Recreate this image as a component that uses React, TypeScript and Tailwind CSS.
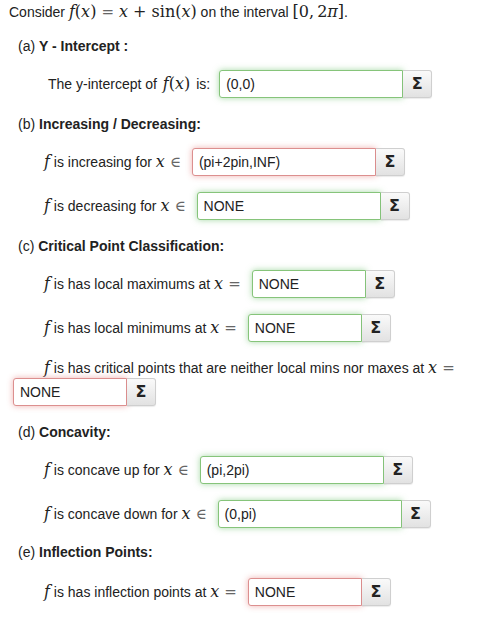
import type { ReactNode } from 'react';

type Status = 'ok' | 'bad';

const MathI = ({ children }: { children: ReactNode }) => (
  <span className="font-['DejaVu_Serif','Liberation_Serif',serif] text-[16px] italic">{children}</span>
);

const MathR = ({ children }: { children: ReactNode }) => (
  <span className="font-['DejaVu_Serif','Liberation_Serif',serif] text-[16px]">{children}</span>
);

const Rel = ({ children }: { children: ReactNode }) => (
  <span className="mx-[5px] font-['DejaVu_Serif','Liberation_Serif',serif] text-[15px] text-[#666]">{children}</span>
);

function AnswerBox({ value, status, width }: { value: string; status: Status; width: string }) {
  const ring =
    status === 'ok'
      ? 'border-[#86c47a] shadow-[0_0_6px_rgba(92,184,92,0.55)]'
      : 'border-[#dc8f8f] shadow-[0_0_6px_rgba(217,83,79,0.45)]';
  return (
    <div className="flex h-[28px] shrink-0">
      <div
        className={`flex items-center rounded-l-[3px] border bg-white px-[6px] text-[14px] text-[#222] ${ring} ${width}`}
      >
        {value}
      </div>
      <div className="flex w-[29px] items-center justify-center rounded-r-[3px] border border-l-0 border-[#cfcfcf] bg-gradient-to-b from-[#fafafa] to-[#e2e2e2] font-['DejaVu_Sans',sans-serif] text-[16px] font-bold text-[#222] shadow-[0_1px_1px_rgba(0,0,0,0.08)]">
        Σ
      </div>
    </div>
  );
}

function Heading({ tag, title, className = '' }: { tag: string; title: string; className?: string }) {
  return (
    <div className={`flex h-[20px] items-center pl-[18px] ${className}`}>
      {tag}&nbsp;<span className="font-bold">{title}</span>
    </div>
  );
}

function Row({ children, className = '' }: { children: ReactNode; className?: string }) {
  return <div className={`flex h-[28px] items-center gap-[6px] pl-[44px] ${className}`}>{children}</div>;
}

const F = () => <MathI>f</MathI>;
const X = () => <MathI>x</MathI>;

export default function App() {
  return (
    <div className="h-[622px] w-[482px] bg-white font-['Liberation_Sans',Arial,sans-serif] text-[14px] text-[#222]">
      <div className="flex h-[24px] items-center pl-[9px]">
        Consider&nbsp;
        <MathI>f</MathI>
        <MathR>(</MathR>
        <MathI>x</MathI>
        <MathR>)</MathR>
        <Rel>=</Rel>
        <MathI>x</MathI>
        <MathR>&nbsp;+&nbsp;sin(</MathR>
        <MathI>x</MathI>
        <MathR>)</MathR>
        &nbsp;on the interval&nbsp;
        <MathR>[0,&#8201;2</MathR>
        <MathI>π</MathI>
        <MathR>]</MathR>.
      </div>

      <Heading tag="(a)" title="Y - Intercept :" className="mt-[12px]" />
      <Row className="mt-[14px] gap-[9px] pl-[48px]">
        <span>
          The y-intercept of{' '}
          <span className="mx-[2px]">
            <MathI>f</MathI>
            <MathR>(</MathR>
            <MathI>x</MathI>
            <MathR>)</MathR>
          </span>{' '}
          is:
        </span>
        <AnswerBox value="(0,0)" status="ok" width="w-[184px]" />
      </Row>

      <Heading tag="(b)" title="Increasing / Decreasing:" className="mt-[16px]" />
      <Row className="mt-[14px]">
        <span>
          <F /> is increasing for <X />
          <Rel>∈</Rel>
        </span>
        <AnswerBox value="(pi+2pin,INF)" status="bad" width="w-[184px]" />
      </Row>
      <Row className="mt-[16px]">
        <span>
          <F /> is decreasing for <X />
          <Rel>∈</Rel>
        </span>
        <AnswerBox value="NONE" status="ok" width="w-[184px]" />
      </Row>

      <Heading tag="(c)" title="Critical Point Classification:" className="mt-[16px]" />
      <Row className="mt-[14px]">
        <span>
          <F /> is has local maximums at <X />
          <Rel>=</Rel>
        </span>
        <AnswerBox value="NONE" status="ok" width="w-[114px]" />
      </Row>
      <Row className="mt-[16px]">
        <span>
          <F /> is has local minimums at <X />
          <Rel>=</Rel>
        </span>
        <AnswerBox value="NONE" status="ok" width="w-[114px]" />
      </Row>
      <div className="mt-[16px] flex h-[20px] items-center pl-[44px]">
        <F />
        &nbsp;is has critical points that are neither local mins nor maxes at&nbsp;
        <X />
        <Rel>=</Rel>
      </div>
      <div className="flex pl-[13px]">
        <AnswerBox value="NONE" status="bad" width="w-[114px]" />
      </div>

      <Heading tag="(d)" title="Concavity:" className="mt-[16px]" />
      <Row className="mt-[14px]">
        <span>
          <F /> is concave up for <X />
          <Rel>∈</Rel>
        </span>
        <AnswerBox value="(pi,2pi)" status="ok" width="w-[184px]" />
      </Row>
      <Row className="mt-[16px]">
        <span>
          <F /> is concave down for <X />
          <Rel>∈</Rel>
        </span>
        <AnswerBox value="(0,pi)" status="ok" width="w-[184px]" />
      </Row>

      <Heading tag="(e)" title="Inflection Points:" className="mt-[14px]" />
      <Row className="mt-[16px]">
        <span>
          <F /> is has inflection points at <X />
          <Rel>=</Rel>
        </span>
        <AnswerBox value="NONE" status="bad" width="w-[114px]" />
      </Row>
    </div>
  );
}
